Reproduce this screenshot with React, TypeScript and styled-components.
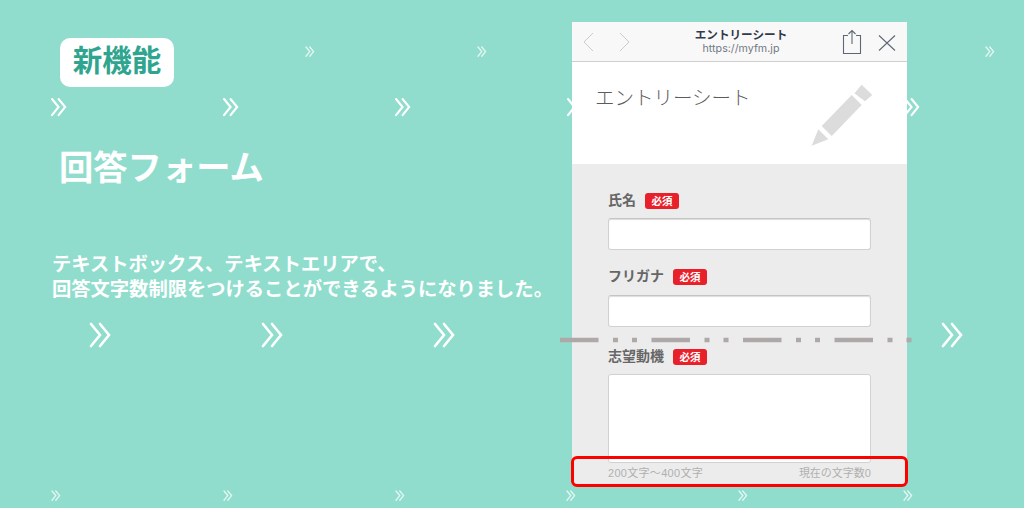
import React from "react";
import styled, { createGlobalStyle } from "styled-components";

const Global = createGlobalStyle`
  html, body { margin: 0; padding: 0; }
  body { font-family: "Noto Sans CJK JP", "Noto Sans", sans-serif; }
`;

const Page = styled.div`
  position: relative;
  width: 1024px;
  height: 508px;
  overflow: hidden;
  background: #90ddcd;
  display: flex;
  align-items: flex-start;
`;

const Pattern = styled.svg`
  position: absolute;
  inset: 0;
  width: 1024px;
  height: 508px;
`;

const Left = styled.div`
  position: relative;
  width: 572px;
  flex: none;
  padding: 38px 0 0 52px;
  box-sizing: border-box;
  color: #fff;
`;

const Badge = styled.div`
  width: 114px;
  height: 49px;
  margin-left: 8px;
  background: #fff;
  border-radius: 10px;
  color: #2fa58f;
  font-size: 29.5px;
  font-weight: 700;
  line-height: 41px;
  text-align: center;
`;

const Title = styled.h1`
  margin: 53px 0 0 7px;
  font-size: 34.3px;
  font-weight: 700;
  line-height: 50px;
  white-space: nowrap;
`;

const Lead = styled.p`
  margin: 61px 0 0;
  font-size: 19.3px;
  font-weight: 700;
  line-height: 25px;
  white-space: nowrap;
`;

const Phone = styled.div`
  position: relative;
  width: 335px;
  height: 463px;
  margin-top: 22px;
  flex: none;
  background: #ececec;
  overflow: hidden;
`;

const Bar = styled.div`
  height: 39px;
  background: #f8f8f8;
  border-bottom: 1px solid #cfcfcf;
  display: flex;
  align-items: center;
  padding: 0 0 0 11px;
`;

const BarIcon = styled.svg`
  display: block;
  flex: none;
`;

const BarTitle = styled.div`
  flex: 1;
  text-align: center;
  padding-right: 2px;
`;

const BarHeading = styled.div`
  font-size: 11.6px;
  font-weight: 700;
  line-height: 14px;
  color: #333a4a;
  margin-top: -1px;
`;

const BarUrl = styled.div`
  font-family: "Inter", "Liberation Sans", sans-serif;
  font-size: 10.7px;
  line-height: 14px;
  margin-top: 1px;
  color: #727884;
`;

const Hero = styled.div`
  height: 102px;
  background: #fff;
  display: flex;
  justify-content: space-between;
  padding: 21px 34px 0 23px;
  box-sizing: border-box;
`;

const HeroTitle = styled.div`
  font-size: 19.5px;
  font-weight: 300;
  line-height: 28px;
  color: #5c5c5c;
`;

const Form = styled.div`
  padding: 27px 36px 0;
`;

const LabelRow = styled.div`
  display: flex;
  align-items: center;
  gap: 9px;
  height: 20px;
`;

const Label = styled.span`
  font-size: 14px;
  font-weight: 700;
  line-height: 17px;
  padding-bottom: 3px;
  color: #666;
`;

const Required = styled.span`
  width: 34px;
  height: 16px;
  background: #e8202a;
  border-radius: 3px;
  color: #fff;
  font-size: 10.5px;
  font-weight: 700;
  line-height: 16px;
  text-align: center;
`;

const Input = styled.div<{ $height: number; $top: number; $bottom?: number; $flat?: boolean }>`
  height: ${(p) => p.$height}px;
  margin: ${(p) => p.$top}px 0 ${(p) => p.$bottom ?? 0}px;
  background: #fff;
  border: 1px solid #cfd2d4;
  border-top-color: ${(p) => (p.$flat ? "#cfd2d4" : "#c4c4c4")};
  border-radius: 3px;
  box-shadow: ${(p) => (p.$flat ? "none" : "inset 0 1px 1px #ddd")};
`;

const Counts = styled.div`
  display: flex;
  justify-content: space-between;
  margin-top: 2px;
  font-family: "Liberation Sans", "Noto Sans CJK JP", sans-serif;
  font-size: 11px;
  line-height: 16px;
  color: #b0b0b0;
`;

const MinMax = styled.span`
  letter-spacing: 0.3px;
`;

const Highlight = styled.div`
  position: absolute;
  left: 571px;
  top: 456px;
  width: 331px;
  height: 25px;
  border: 3px solid #f00;
  border-radius: 6px;
`;

const Cut = styled.svg`
  position: absolute;
  left: 560px;
  top: 337px;
  width: 352px;
  height: 6px;
`;

const chev = "M0 0 L9 11 L0 22 M9 0 L18 11 L9 22";
const rows = [
  { x: [134, 306, 478, 650, 822, 986], y: 47, s: 0.42, o: 0.75, w: 3.2 },
  { x: [52, 224, 396, 568, 740, 905], y: 99, s: 0.73, o: 1, w: 2.9 },
  { x: [91, 263, 435, 607, 779, 943], y: 324, s: 1, o: 1, w: 2.6 },
  { x: [52, 224, 396, 567, 739, 904], y: 491, s: 0.42, o: 0.75, w: 3.2 },
];

export default function App() {
  return (
    <Page>
      <Global />
      <Pattern viewBox="0 0 1024 508" fill="none">
        {rows.map((r) =>
          r.x.map((x) => (
            <path
              key={`${r.y}-${x}`}
              d={chev}
              stroke="#fff"
              strokeWidth={r.w}
              strokeLinecap="round"
              opacity={r.o}
              transform={`translate(${x} ${r.y}) scale(${r.s})`}
            />
          ))
        )}
      </Pattern>
      <Left>
        <Badge>新機能</Badge>
        <Title>回答フォーム</Title>
        <Lead>
          テキストボックス、テキストエリアで、
          <br />
          回答文字数制限をつけることができるようになりました。
        </Lead>
      </Left>
      <Phone>
        <Bar>
          <BarIcon width="60" height="24" viewBox="0 0 60 24" fill="none" stroke="#c9cbce" strokeWidth="1">
            <path d="M10 3 L1 12 L10 21" />
            <path d="M37 3 L46 12 L37 21" />
          </BarIcon>
          <BarTitle>
            <BarHeading>エントリーシート</BarHeading>
            <BarUrl>https://myfm.jp</BarUrl>
          </BarTitle>
          <BarIcon width="66" height="28" viewBox="0 0 66 28" fill="none" stroke="#5f6675" strokeWidth="1.1">
            <path d="M7 7.5 H2.5 V25.5 H19.5 V7.5 H15" />
            <path d="M11 16 V2.5 M7.5 6 L11 2.5 L14.5 6" />
            <path d="M38 7.5 L54 22.5 M54 7.5 L38 22.5" />
          </BarIcon>
        </Bar>
        <Hero>
          <HeroTitle>エントリーシート</HeroTitle>
          <BarIcon width="62" height="64" viewBox="0 0 62 64" fill="#dcdcdc">
            <path d="M44 10.3 L50.7 2.3 L60.7 12 L54 17.7 Z" stroke="#dcdcdc" strokeWidth="1" strokeLinejoin="round" />
            <path d="M40.7 12 L50.7 22 L20.7 53 L10.7 43 Z" />
            <path d="M7.3 46.3 L17.3 56.3 L0.7 62.7 Z" />
          </BarIcon>
        </Hero>
        <Form>
          <LabelRow>
            <Label>氏名</Label>
            <Required>必須</Required>
          </LabelRow>
          <Input $height={30} $top={7} $bottom={17} />
          <LabelRow>
            <Label>フリガナ</Label>
            <Required>必須</Required>
          </LabelRow>
          <Input $height={30} $top={8} $bottom={20} />
          <LabelRow>
            <Label>志望動機</Label>
            <Required>必須</Required>
          </LabelRow>
          <Input $height={87} $top={7} $flat />
          <Counts>
            <MinMax>200文字～400文字</MinMax>
            <span>現在の文字数0</span>
          </Counts>
        </Form>
      </Phone>
      <Highlight />
      <Cut viewBox="0 0 352 6">
        <path d="M0 3 H352" stroke="#aea8a8" strokeWidth="4.5" strokeDasharray="38.5 14.5 5 14 5 14.5" />
      </Cut>
    </Page>
  );
}
